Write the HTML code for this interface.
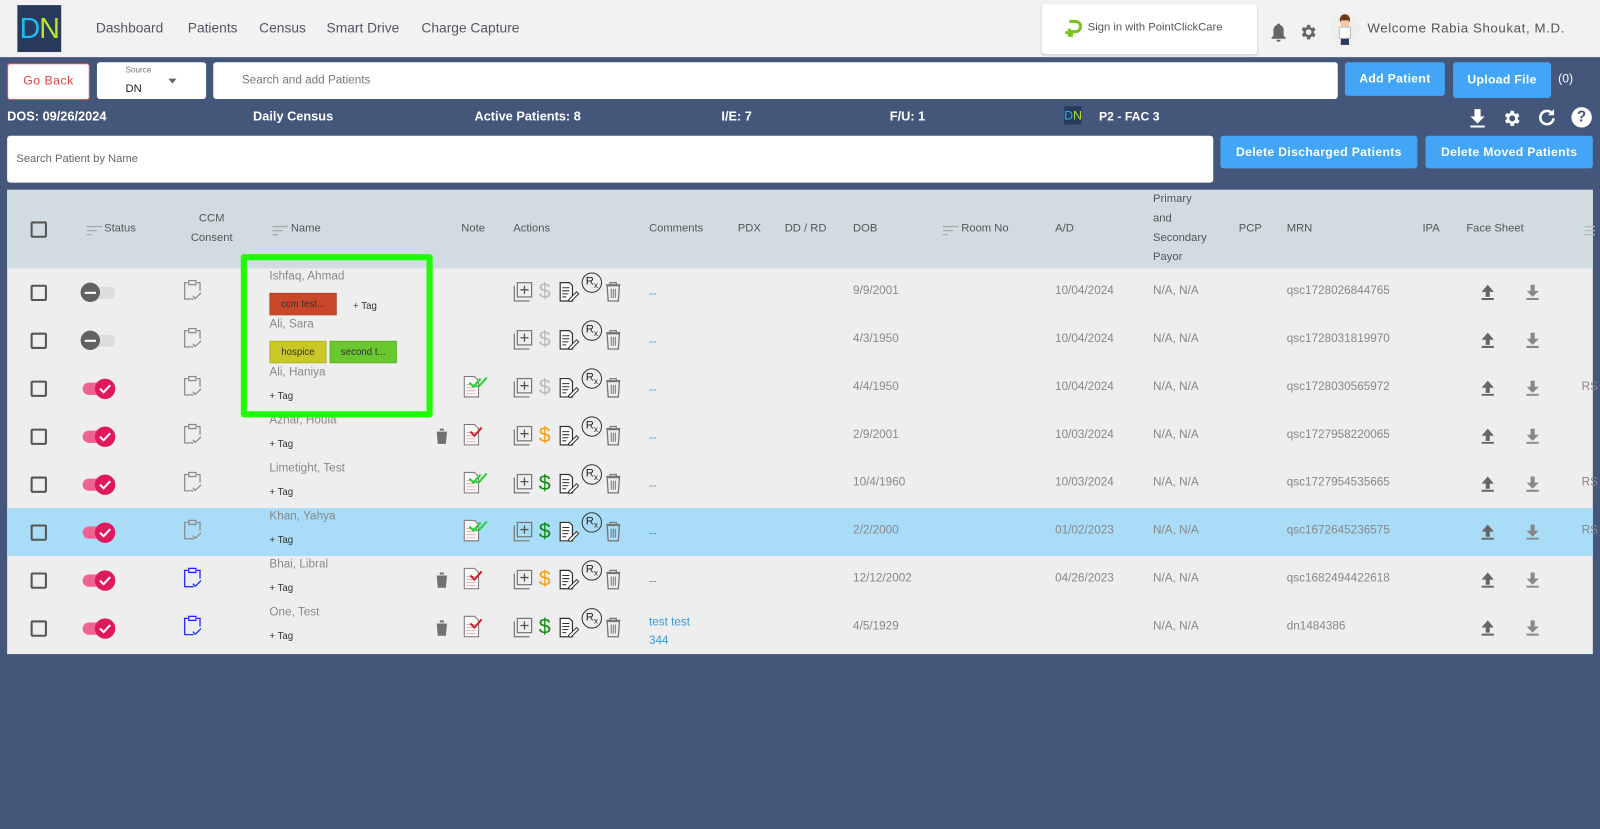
<!DOCTYPE html>
<html><head><meta charset="utf-8"><style>
*{box-sizing:border-box;margin:0;padding:0}
body{width:1600px;height:829px;background:#44577b;font-family:"Liberation Sans",sans-serif;position:relative;overflow:hidden;color:#666}
#w{position:absolute;left:0;top:0;width:1568px;height:812px;transform:scale(1.0204);transform-origin:0 0}
.a{position:absolute}
.nav{left:0;top:0;width:1568px;height:56px;background:#f2f2f2}
.nl{top:20px;font-size:13.5px;color:#556}
.btn{background:#42a5f5;color:#fff;border-radius:3px;font-size:12px;text-align:center;font-weight:bold;letter-spacing:.3px}
.wt{color:#fff;font-size:12.5px;font-weight:bold;top:107px}
.tbl{left:7px;top:186px;width:1554px;height:455px;background:#eee}
.hd{left:0;top:0;width:1554px;height:77px;background:#d0dce1}
.h{font-size:11px;color:#555;line-height:19px}
.row{left:0;width:1554px;height:47px}
.cb{width:16px;height:16px;border:2px solid #555;border-radius:2px}
.t{font-size:11.5px;color:#888}
.nm{font-size:11.5px;color:#888}
.tag{font-size:9.5px;color:#333}
.bl{color:#3a9ad9}
</style></head><body><div id="w">
<div class="a nav"></div>
<div class="a" style="left:17px;top:5px;width:43px;height:46px;background:#2a3a5c;font:28px 'Liberation Sans Narrow','Liberation Sans',sans-serif;line-height:46px;text-align:center;letter-spacing:-1px"><span style="color:#1ebdf0">D</span><span style="color:#b8e62e">N</span></div>
<div class="a nl" style="left:94px">Dashboard</div>
<div class="a nl" style="left:184px">Patients</div>
<div class="a nl" style="left:254px">Census</div>
<div class="a nl" style="left:320px">Smart Drive</div>
<div class="a nl" style="left:413px">Charge Capture</div>
<div class="a" style="left:1021px;top:4px;width:211px;height:49px;background:#fff;border-radius:3px;box-shadow:0 1px 2px #ccc"></div>
<svg class="a" style="left:1043px;top:18px" width="20" height="20" viewBox="0 0 20 20"><path d="M5 3h6a5 5 0 0 1 0 10H7v5" fill="none" stroke="#7cc520" stroke-width="3"/><path d="M1 14h8M5 10v8" stroke="#7cc520" stroke-width="3"/></svg>
<div class="a" style="left:1066px;top:21px;font-size:11px;color:#555">Sign in with PointClickCare</div>
<svg class="a" style="left:1245px;top:22px" width="16" height="19" viewBox="0 0 16 19"><path d="M8 1a1.5 1.5 0 0 1 1.5 1.5A5 5 0 0 1 13 8v5l2 2v1H1v-1l2-2V8a5 5 0 0 1 3.5-5.5A1.5 1.5 0 0 1 8 1zM6 17h4a2 2 0 0 1-4 0z" fill="#666"/></svg>
<svg class="a" style="left:1273px;top:22px" width="19" height="19" viewBox="0 0 24 24"><path fill="#666" d="M19.4 13a7.5 7.5 0 0 0 0-2l2.1-1.6-2-3.5-2.5 1a7.5 7.5 0 0 0-1.7-1L15 3h-4l-.4 2.7a7.5 7.5 0 0 0-1.7 1l-2.5-1-2 3.5L6.6 11a7.5 7.5 0 0 0 0 2l-2.1 1.6 2 3.5 2.5-1a7.5 7.5 0 0 0 1.7 1L11 21h4l.4-2.7a7.5 7.5 0 0 0 1.7-1l2.5 1 2-3.5zM13 15.5a3.5 3.5 0 1 1 0-7 3.5 3.5 0 0 1 0 7z" transform="translate(-1 0)"/></svg>
<div class="a" style="left:1303px;top:12px;width:30px;height:33px;border-radius:50%;background:#eee"></div>
<div class="a" style="left:1313px;top:14px;width:10px;height:8px;border-radius:5px 5px 2px 2px;background:#6b3a1e"></div>
<div class="a" style="left:1314px;top:20px;width:8px;height:6px;background:#f3c9a0"></div>
<div class="a" style="left:1312px;top:26px;width:12px;height:12px;background:#fff;border:1px solid #bbb"></div>
<div class="a" style="left:1314px;top:38px;width:8px;height:6px;background:#2b3a5a"></div>
<div class="a" style="left:1340px;top:20px;font-size:13px;color:#555;letter-spacing:.6px">Welcome Rabia Shoukat, M.D.</div>

<div class="a" style="left:7px;top:62px;width:81px;height:36px;background:#fff;border:1.5px solid #e05a5a;border-radius:3px;color:#e04040;font-size:12px;text-align:center;line-height:33px;letter-spacing:.5px">Go Back</div>
<div class="a" style="left:95px;top:61px;width:107px;height:36px;background:#fff;border-radius:3px"></div>
<div class="a" style="left:123px;top:64px;font-size:8px;color:#777">Source</div>
<div class="a" style="left:123px;top:81px;font-size:11px;color:#222">DN</div>
<div class="a" style="left:165px;top:77px;border:4px solid transparent;border-top:5px solid #666"></div>
<div class="a" style="left:209px;top:61px;width:1102px;height:36px;background:#fff;border-radius:3px"></div>
<div class="a" style="left:237px;top:73px;font-size:11.5px;color:#777">Search and add Patients</div>
<div class="a btn" style="left:1318px;top:61px;width:98px;height:33px;line-height:33px">Add Patient</div>
<div class="a btn" style="left:1424px;top:61px;width:96px;height:35px;line-height:35px">Upload File</div>
<div class="a" style="left:1527px;top:70px;color:#fff;font-size:12px">(0)</div>

<div class="a wt" style="left:7px">DOS: 09/26/2024</div>
<div class="a wt" style="left:248px">Daily Census</div>
<div class="a wt" style="left:465px">Active Patients: 8</div>
<div class="a wt" style="left:707px">I/E: 7</div>
<div class="a wt" style="left:872px">F/U: 1</div>
<div class="a" style="left:1043px;top:104px;width:17px;height:18px;background:#2a3a5c;font:12px 'Liberation Sans Narrow',sans-serif;line-height:18px;text-align:center"><span style="color:#1ebdf0">D</span><span style="color:#b8e62e">N</span></div>
<div class="a wt" style="left:1077px;font-size:12px">P2 - FAC 3</div>
<svg class="a" style="left:1439px;top:106px" width="18" height="20" viewBox="0 0 18 20"><path d="M6 1h6v7h4l-7 7-7-7h4z M2 17h14v2H2z" fill="#fff"/></svg>
<svg class="a" style="left:1472px;top:106px" width="20" height="20" viewBox="0 0 24 24"><path fill="#fff" d="M19.4 13a7.5 7.5 0 0 0 0-2l2.1-1.6-2-3.5-2.5 1a7.5 7.5 0 0 0-1.7-1L15 3h-4l-.4 2.7a7.5 7.5 0 0 0-1.7 1l-2.5-1-2 3.5L6.6 11a7.5 7.5 0 0 0 0 2l-2.1 1.6 2 3.5 2.5-1a7.5 7.5 0 0 0 1.7 1L11 21h4l.4-2.7a7.5 7.5 0 0 0 1.7-1l2.5 1 2-3.5zM13 15.5a3.5 3.5 0 1 1 0-7 3.5 3.5 0 0 1 0 7z" transform="translate(-1 0)"/></svg>
<svg class="a" style="left:1507px;top:106px" width="18" height="18" viewBox="0 0 18 18"><path d="M14 5A6.5 6.5 0 1 0 15.5 10" fill="none" stroke="#fff" stroke-width="2.5"/><path d="M16 1v6h-6z" fill="#fff"/></svg>
<div class="a" style="left:1540px;top:105px;width:20px;height:20px;border-radius:50%;background:#fff;color:#44577b;font-weight:bold;font-size:15px;text-align:center;line-height:20px">?</div>

<div class="a" style="left:7px;top:133px;width:1182px;height:46px;background:#fff;border-radius:3px"></div>
<div class="a" style="left:16px;top:150px;font-size:11px;color:#666">Search Patient by Name</div>
<div class="a btn" style="left:1196px;top:133px;width:193px;height:32px;line-height:32px">Delete Discharged Patients</div>
<div class="a btn" style="left:1397px;top:133px;width:164px;height:32px;line-height:32px">Delete Moved Patients</div>

<div class="a tbl">
<div class="a hd"></div>
<div class="a cb" style="left:23px;top:31px"></div>
<svg class="a" style="left:78px;top:35px" width="15" height="10"><path d="M0 1h15M0 5h10M0 9h5" stroke="#aaa" stroke-width="1.3"/></svg>
<div class="a h" style="left:95px;top:29px">Status</div>
<div class="a h" style="left:180px;top:19px;text-align:center">CCM<br>Consent</div>
<svg class="a" style="left:260px;top:35px" width="15" height="10"><path d="M0 1h15M0 5h10M0 9h5" stroke="#aaa" stroke-width="1.3"/></svg>
<div class="a h" style="left:278px;top:29px">Name</div>
<div class="a h" style="left:445px;top:29px">Note</div>
<div class="a h" style="left:496px;top:29px">Actions</div>
<div class="a h" style="left:629px;top:29px">Comments</div>
<div class="a h" style="left:716px;top:29px">PDX</div>
<div class="a h" style="left:762px;top:29px">DD / RD</div>
<div class="a h" style="left:829px;top:29px">DOB</div>
<svg class="a" style="left:917px;top:35px" width="15" height="10"><path d="M0 1h15M0 5h10M0 9h5" stroke="#aaa" stroke-width="1.3"/></svg>
<div class="a h" style="left:935px;top:29px">Room No</div>
<div class="a h" style="left:1027px;top:29px">A/D</div>
<div class="a h" style="left:1123px;top:0px">Primary<br>and<br>Secondary<br>Payor</div>
<div class="a h" style="left:1207px;top:29px">PCP</div>
<div class="a h" style="left:1254px;top:29px">MRN</div>
<div class="a h" style="left:1387px;top:29px">IPA</div>
<div class="a h" style="left:1430px;top:29px">Face Sheet</div>
<svg class="a" style="left:1546px;top:35px" width="10" height="10"><path d="M0 1h10M0 5h10M0 9h10" stroke="#bbb" stroke-width="1.3"/></svg>
<div id="rows"></div>
</div>
<div class="a" style="left:236px;top:249px;width:188px;height:160px;border:6px solid #1dff00;border-radius:3px"></div>
</div>
<script>
var R=[
["Ishfaq, Ahmad",0,0,[["ccm test...","#c9482b"],["+ Tag",""]],0,0,"#bbb","--",1,"9/9/2001","10/04/2024","qsc1728026844765",0],
["Ali, Sara",0,0,[["hospice","#c8c828"],["second t...","#6ac72e"]],0,0,"#bbb","--",1,"4/3/1950","10/04/2024","qsc1728031819970",0],
["Ali, Haniya",1,0,[["+ Tag","x"]],"g",0,"#bbb","--",1,"4/4/1950","10/04/2024","qsc1728030565972",1],
["Azhar, Houla",1,0,[["+ Tag","x"]],"r",1,"#f5a00f","--",1,"2/9/2001","10/03/2024","qsc1727958220065",0],
["Limetight, Test",1,0,[["+ Tag","x"]],"g",0,"#118a11","--",0,"10/4/1960","10/03/2024","qsc1727954535665",1],
["Khan, Yahya",1,0,[["+ Tag","x"]],"g",0,"#118a11","--",1,"2/2/2000","01/02/2023","qsc1672645236575",1],
["Bhai, Libral",1,1,[["+ Tag","x"]],"r",1,"#f5a00f","--",0,"12/12/2002","04/26/2023","qsc1682494422618",0],
["One, Test",1,1,[["+ Tag","x"]],"r",1,"#118a11","test test<br>344",1,"4/5/1929","","dn1484386",0]];
var h="";
R.forEach(function(r,i){
var y=77+i*47;
h+='<div class="a row" style="top:'+y+'px;'+(i==5?'background:#a8dcf7':'')+'">';
h+='<div class="a cb" style="left:23px;top:16px"></div>';
if(r[1]){h+='<div class="a" style="left:74px;top:18px;width:28px;height:12px;border-radius:6px;background:#f06292"></div><div class="a" style="left:86px;top:14px;width:20px;height:20px;border-radius:50%;background:#e0195e"></div><svg class="a" style="left:90px;top:19px" width="12" height="10"><path d="M1 5l3.5 3.5L11 1.5" stroke="#fff" stroke-width="2" fill="none"/></svg>';}
else{h+='<div class="a" style="left:74px;top:18px;width:32px;height:12px;border-radius:6px;background:#ddd"></div><div class="a" style="left:72px;top:14px;width:19px;height:19px;border-radius:50%;background:#616161"></div><div class="a" style="left:76px;top:22.5px;width:11px;height:2px;background:#fff"></div>';}
var cc=r[2]?'#1a1aff':'#888';
h+='<svg class="a" style="left:173px;top:11px" width="18" height="20" viewBox="0 0 18 20"><path d="M4 3H1v16h9M13 3h3v8" fill="none" stroke="'+cc+'" stroke-width="1.2"/><rect x="5" y="1" width="7" height="4" fill="none" stroke="'+cc+'" stroke-width="1.2"/><path d="M9 16l2.5 2.5L17 13" fill="none" stroke="'+cc+'" stroke-width="1.2"/></svg>';
h+='<div class="a nm" style="left:257px;top:2px">'+r[0]+'</div>';
var x=257;r[3].forEach(function(t){
 if(t[1]=="x"){h+='<div class="a tag" style="left:257px;top:26px">+ Tag</div>';}
 else if(t[1]==""){h+='<div class="a tag" style="left:'+(x+13)+'px;top:32px">+ Tag</div>';}
 else{var w=t[0].length>7?66:56;h+='<div class="a tag" style="left:'+x+'px;top:24px;width:'+w+'px;height:22px;background:'+t[1]+';line-height:22px;text-align:center;border:1px solid rgba(0,0,0,.1)">'+t[0]+'</div>';x+=w+3;}
});
if(r[5])h+='<svg class="a" style="left:419px;top:15px" width="14" height="17"><path d="M1 3h12M5 3V1h4v2M2 4h10l-1 12H3z" fill="#707070"/></svg>';
if(r[4]){var c=r[4]=="g"?'#2ecc40':'#d0202a';h+='<svg class="a" style="left:446px;top:9px" width="32" height="25"><path d="M2 3h10l4 4v16H2z" fill="#fafafa" stroke="#777"/><path d="M4 11h9M4 14h9M4 17h9M4 20h9" stroke="#e3a3a3" stroke-width=".8"/>'+(r[4]=="g"?'<path d="M7 9l4 4 7-8M13 12l3 1 8-9" stroke="'+c+'" stroke-width="2" fill="none"/>':'<path d="M8 10l4 4 7-8" stroke="'+c+'" stroke-width="2" fill="none"/>')+'</svg>';}
h+='<svg class="a" style="left:496px;top:13px" width="20" height="20"><rect x="4" y="1" width="14" height="14" fill="none" stroke="#777" stroke-width="1.2"/><path d="M1 4v15h15" fill="none" stroke="#777" stroke-width="1.2"/><path d="M11 4v8M7 8h8" stroke="#555" stroke-width="1.3"/></svg>';
h+='<div class="a" style="left:521px;top:11px;font-size:21px;color:'+r[6]+'">$</div>';
h+='<svg class="a" style="left:541px;top:13px" width="20" height="20"><path d="M1 1h9l3 3v15H1z" fill="#fff" stroke="#333" stroke-width="1.2"/><path d="M3 6h7M3 9h7M3 12h6M3 15h4" stroke="#333"/><path d="M9 18l8-8 2 2-8 8z" fill="#fff" stroke="#333"/></svg>';
h+='<div class="a" style="left:563px;top:4px;width:20px;height:20px;border:1.3px solid #333;border-radius:50%;font-size:11px;color:#222;line-height:17px;text-align:center">R<sub style="font-size:8px">x</sub></div>';
h+='<svg class="a" style="left:586px;top:13px" width="16" height="20"><path d="M1 3h14M5 3V1h6v2" stroke="#777" fill="none" stroke-width="1.2"/><path d="M2 4h12l-1 15H3z" fill="none" stroke="#777" stroke-width="1.3"/><path d="M6 7v9M8 7v9M10 7v9" stroke="#777"/></svg>';
h+='<div class="a t '+(r[8]?'bl':'')+'" style="left:629px;top:'+(r[7].length>3?9:16)+'px;line-height:18px">'+r[7]+'</div>';
h+='<div class="a t" style="left:829px;top:16px">'+r[9]+'</div>';
h+='<div class="a t" style="left:1027px;top:16px">'+r[10]+'</div>';
h+='<div class="a t" style="left:1123px;top:16px">N/A, N/A</div>';
h+='<div class="a t" style="left:1254px;top:16px">'+r[11]+'</div>';
h+='<svg class="a" style="left:1444px;top:15px" width="14" height="16"><path d="M7 1l6 7H9v5H5V8H1z M1 14h12v2H1z" fill="#666"/></svg>';
h+='<svg class="a" style="left:1488px;top:15px" width="14" height="16"><path d="M5 1h4v6h4l-6 6-6-6h4z M1 14h12v2H1z" fill="#888"/></svg>';
if(r[12])h+='<div class="a t" style="left:1543px;top:16px">RS</div>';
h+='</div>';});
document.getElementById('rows').innerHTML=h;
</script>
</body></html>
